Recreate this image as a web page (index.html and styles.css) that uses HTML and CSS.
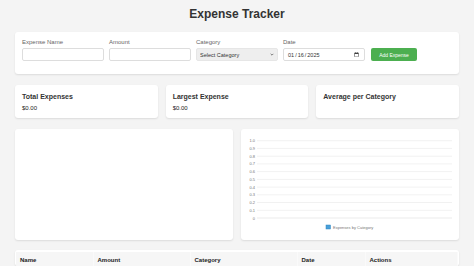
FILE: index.html
```html
<!DOCTYPE html>
<html lang="en">
  <head>
    <meta charset="UTF-8" />
    <meta name="viewport" content="width=device-width, initial-scale=1.0" />
    <title>Expense Tracker</title>
    <link rel="stylesheet" href="styles.css">
  </head>
  <body>
    <h1 class="title">Expense Tracker</h1>

    <!-- 입력 폼 -->
    <form class="card expense-form" id="expense_form">
      <div class="form-group">
        <label for="expense_name">Expense Name</label>
        <input type="text" id="expense_name" class="form-control" />
      </div>
      <div class="form-group">
        <label for="amount">Amount</label>
        <input type="number" id="amount" class="form-control" />
      </div>
      <div class="form-group">
        <label for="category">Category</label>
        <select id="category" class="form-control form-select">
          <option>Select Category</option>
        </select>
      </div>
      <div class="form-group">
        <label for="date">Date</label>
        <input type="date" id="date" class="form-control" value="2025-01-16" />
      </div>
      <div class="form-group form-btn">
        <button type="submit" class="btn-add">Add Expense</button>
      </div>
    </form>

    <!-- 요약 -->
    <div class="summary">
      <div class="card stat">
        <h3 class="stat-title">Total Expenses</h3>
        <p class="stat-value">$0.00</p>
      </div>
      <div class="card stat">
        <h3 class="stat-title">Largest Expense</h3>
        <p class="stat-value">$0.00</p>
      </div>
      <div class="card stat">
        <h3 class="stat-title">Average per Category</h3>
        <p class="stat-value"></p>
      </div>
    </div>

    <!-- 차트 -->
    <div class="charts">
      <div class="card chart-box"></div>
      <div class="card chart-box">
        <svg class="bar-chart" width="204" height="97" viewBox="0 0 204 97">
          <g class="grid">
            <line x1="9" y1="4.7" x2="204" y2="4.7" />
            <line x1="9" y1="12.4" x2="204" y2="12.4" />
            <line x1="9" y1="20.2" x2="204" y2="20.2" />
            <line x1="9" y1="27.9" x2="204" y2="27.9" />
            <line x1="9" y1="35.6" x2="204" y2="35.6" />
            <line x1="9" y1="43.4" x2="204" y2="43.4" />
            <line x1="9" y1="51.1" x2="204" y2="51.1" />
            <line x1="9" y1="58.8" x2="204" y2="58.8" />
            <line x1="9" y1="66.5" x2="204" y2="66.5" />
            <line x1="9" y1="74.3" x2="204" y2="74.3" />
            <line x1="9" y1="82" x2="204" y2="82" class="axis" />
          </g>
          <g class="ticks">
            <text x="7" y="6.2">1.0</text>
            <text x="7" y="13.9">0.9</text>
            <text x="7" y="21.7">0.8</text>
            <text x="7" y="29.4">0.7</text>
            <text x="7" y="37.1">0.6</text>
            <text x="7" y="44.9">0.5</text>
            <text x="7" y="52.6">0.4</text>
            <text x="7" y="60.3">0.3</text>
            <text x="7" y="68">0.2</text>
            <text x="7" y="75.8">0.1</text>
            <text x="7" y="83.5">0</text>
          </g>
          <rect x="78" y="89" width="4.5" height="4" class="legend-box" />
          <text x="85" y="92.5" class="legend">Expenses by Category</text>
        </svg>
      </div>
    </div>

    <!-- 목록 -->
    <div class="card table-box">
      <table class="expense-table">
        <thead>
          <tr>
            <th class="col-name">Name</th>
            <th class="col-amount">Amount</th>
            <th class="col-category">Category</th>
            <th class="col-date">Date</th>
            <th>Actions</th>
          </tr>
        </thead>
        <tbody></tbody>
      </table>
    </div>
  </body>
</html>
```

FILE: styles.css
```css
* {
  box-sizing: border-box;
}

body {
  margin: 0;
  padding: 0 15px;
  background: #f4f4f4;
  font-family: "Liberation Sans", Arial, sans-serif;
  color: #333;
}

.title {
  margin: 7px 0 11px;
  font-size: 12px;
  line-height: 14px;
  text-align: center;
  color: #333;
}

.card {
  background: #fff;
  border-radius: 3px;
  box-shadow: 0 1px 2px rgba(0, 0, 0, 0.1);
}

/* 폼 */
.expense-form {
  display: flex;
  gap: 5px;
  padding: 6px 7px 13px;
  margin-bottom: 11px;
}

.form-group {
  width: 82px;
}

.form-group label {
  display: block;
  font-size: 6px;
  line-height: 8px;
  color: #666;
  margin-bottom: 2px;
}

.form-control {
  display: block;
  width: 100%;
  height: 13px;
  padding: 0 3px;
  font-family: "Liberation Sans", Arial, sans-serif;
  font-size: 5.5px;
  color: #333;
  border: 1px solid #ddd;
  border-radius: 2px;
  background: #fff;
  outline: none;
}

.form-control::-webkit-datetime-edit-text {
  padding: 0;
}

.form-select {
  appearance: none;
  background: #eee url("data:image/svg+xml,%3Csvg xmlns='http://www.w3.org/2000/svg' width='6' height='4' viewBox='0 0 6 4'%3E%3Cpath d='M1 1l2 2 2-2' fill='none' stroke='%23444' stroke-width='1'/%3E%3C/svg%3E") no-repeat right 3px center;
  background-size: 4px 3px;
  border-color: #e6e6e6;
}

.form-btn {
  width: auto;
  margin-left: 1px;
  padding-top: 10px;
}

.btn-add {
  display: block;
  height: 13px;
  width: 46px;
  padding: 0;
  border: 0;
  border-radius: 2px;
  background: #4caf50;
  color: #fff;
  font-family: "Liberation Sans", Arial, sans-serif;
  font-size: 5px;
}

/* 요약 카드 */
.summary {
  display: grid;
  grid-template-columns: repeat(3, 1fr);
  gap: 8px;
  margin-bottom: 11px;
}

.stat {
  height: 33px;
  padding: 7px 7px;
}

.stat-title {
  margin: 0 0 3px;
  font-size: 7px;
  line-height: 9px;
  color: #333;
}

.stat-value {
  margin: 0;
  font-size: 6px;
  line-height: 8px;
  color: #222;
}

/* 차트 */
.charts {
  display: grid;
  grid-template-columns: 1fr 1fr;
  gap: 8px;
  margin-bottom: 10px;
}

.chart-box {
  height: 111px;
  padding: 7px;
}

.bar-chart {
  display: block;
}

.grid line {
  stroke: #e8e8e8;
  stroke-width: 0.6;
}

.grid .axis {
  stroke: #ddd;
}

.ticks text {
  font-family: "Liberation Sans", Arial, sans-serif;
  font-size: 4px;
  fill: #777;
  text-anchor: end;
}

.legend-box {
  fill: #4a9fd8;
  stroke: #2d86c4;
  stroke-width: 0.5;
}

.legend {
  font-family: "Liberation Sans", Arial, sans-serif;
  font-size: 4px;
  fill: #777;
}

/* 테이블 */
.table-box {
  padding: 2px 1px 0;
  height: 16px;
  overflow: hidden;
}

.expense-table {
  width: 100%;
  border-collapse: collapse;
  table-layout: fixed;
}

.expense-table th {
  padding: 4px 4px;
  background: #f6f6f6;
  font-size: 6px;
  line-height: 8px;
  text-align: left;
  color: #222;
  border-right: 1px solid #fafafa;
}

.col-name {
  width: 77px;
}

.col-amount {
  width: 97px;
}

.col-category {
  width: 107px;
}

.col-date {
  width: 68px;
}
```
